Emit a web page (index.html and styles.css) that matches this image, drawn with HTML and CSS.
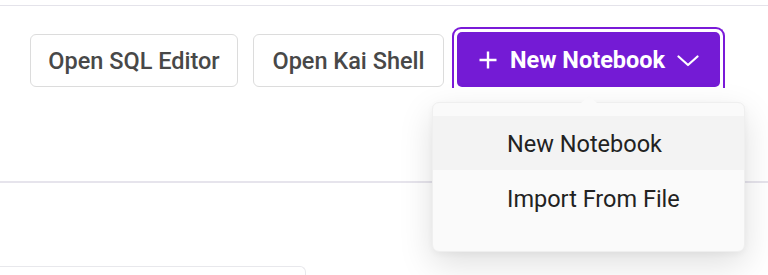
FILE: index.html
```html
<!DOCTYPE html>
<html>
<head>
<meta charset="utf-8">
<link rel="stylesheet" href="styles.css">
</head>
<body>
<div class="page">
  <div class="topline"></div>
  <div class="toolbar">
    <button class="btn">Open SQL Editor</button>
    <button class="btn btn-2">Open Kai Shell</button>
    <div class="primary-wrap">
      <button class="btn-primary">
        <svg class="plus" width="20" height="20" viewBox="0 0 20 20"><path d="M10 1.5V18.5M1.5 10H18.5" stroke="#fff" stroke-width="2.4" fill="none"/></svg>
        <span>New Notebook</span>
        <svg class="chev" width="22" height="12" viewBox="0 0 22 12"><path d="M1.5 1.5L11 10L20.5 1.5" stroke="#fff" stroke-width="2.2" fill="none" stroke-linecap="round" stroke-linejoin="round"/></svg>
      </button>
    </div>
  </div>
  <div class="divider"></div>
  <div class="card"></div>

  <div class="menu">
    <div class="arrow"></div>
    <div class="item active">New Notebook</div>
    <div class="item">Import From File</div>
  </div>
</div>
</body>
</html>
```

FILE: styles.css
```css
* { box-sizing: border-box; }
html, body { margin: 0; padding: 0; background: #ffffff; }
body { font-family: Roboto, "Liberation Sans", sans-serif; width: 768px; height: 275px; overflow: hidden; }
.page { position: relative; width: 768px; height: 275px; overflow: hidden; }
.topline { height: 6px; border-bottom: 1.5px solid #e4e3ea; }
.toolbar {
  display: flex;
  align-items: flex-end;
  padding-left: 30px;
  height: 82px;
  overflow: hidden;
}
.btn {
  height: 53px;
  margin-bottom: 1px;
  padding: 0;
  border: 1.5px solid #dcdcdc;
  border-radius: 6px;
  background: #fff;
  color: #484848;
  font-family: Roboto, "Liberation Sans", sans-serif;
  font-size: 23.5px;
  font-weight: 500;
  width: 208px;
  display: flex;
  align-items: center;
  justify-content: center;
}
.btn-2 { margin-left: 15px; width: 191px; }
.primary-wrap {
  margin-left: 8px;
  padding: 3px 3px 0 3px;
  border: 2px solid #7a1ad8;
  border-bottom: none;
  border-radius: 9px 9px 0 0;
  height: 61px;
}
.btn-primary {
  width: 263px;
  height: 55px;
  background: #741bd5;
  border: none;
  border-radius: 5px;
  color: #fff;
  font-family: Roboto, "Liberation Sans", sans-serif;
  font-size: 23.5px;
  font-weight: 700;
  display: flex;
  align-items: center;
  padding: 0 0 0 21px;
}
.btn-primary .plus { margin-right: 12px; }
.btn-primary .chev { margin-left: 12px; margin-top: 2px; }
.divider { margin-top: 93px; height: 1.5px; background: #e6e4ec; }
.card {
  margin-top: 83px;
  margin-left: -10px;
  width: 316px;
  height: 9px;
  border: 1.5px solid #e8e8ec;
  border-bottom: none;
  border-radius: 6px 6px 0 0;
}
.menu {
  position: absolute;
  left: 432px;
  top: 102px;
  width: 313px;
  height: 150px;
  background: #fafafa;
  border: 1px solid #efefef;
  border-radius: 7px;
  box-shadow: 0 12px 34px rgba(0,0,0,0.13), 0 2px 6px rgba(0,0,0,0.04);
  padding-top: 13px;
}
.arrow {
  position: absolute;
  left: 148px;
  top: -7px;
  width: 0; height: 0;
  border-left: 8px solid transparent;
  border-right: 8px solid transparent;
  border-bottom: 7px solid #fafafa;
}
.item {
  height: 54px;
  padding-left: 74px;
  padding-top: 2px;
  display: flex;
  align-items: center;
  font-size: 23.5px;
  color: #222;
  font-weight: 400;
}
.item + .item { margin-top: 1px; }
.item.active { background: #f3f3f3; }
```
